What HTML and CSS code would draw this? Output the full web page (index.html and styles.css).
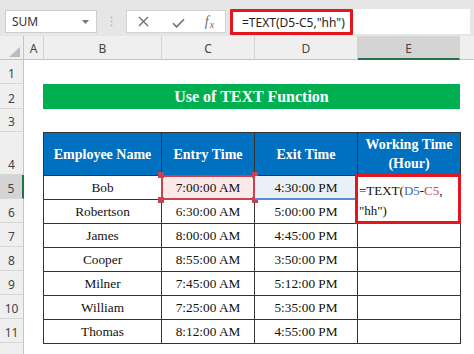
FILE: index.html
```html
<!DOCTYPE html>
<html>
<head>
<meta charset="utf-8">
<link rel="stylesheet" href="styles.css">
</head>
<body>
<div class="app">
  <div class="toolbar">
    <div class="namebox"><span>SUM</span><svg class="caret" width="7" height="4" viewBox="0 0 7 4"><path d="M0 0H7L3.5 4Z" fill="#777"/></svg></div>
    <div class="dots"><svg width="3" height="11" viewBox="0 0 3 11"><circle cx="1.5" cy="1.5" r="1" fill="#bbb"/><circle cx="1.5" cy="5.5" r="1" fill="#bbb"/><circle cx="1.5" cy="9.5" r="1" fill="#bbb"/></svg></div>
    <div class="btns">
      <span class="btn b1"><svg width="11" height="11" viewBox="0 0 11 11"><path d="M1 1L10 10M10 1L1 10" stroke="#6f6f6f" stroke-width="1.4" fill="none"/></svg></span>
      <span class="btn b2"><svg width="13" height="10" viewBox="0 0 13 10"><path d="M1 5.2L4.6 8.8L12 1.2" stroke="#6f6f6f" stroke-width="1.6" fill="none"/></svg></span>
      <span class="btn b3"><span class="fx"><i>f</i><span class="sub">x</span></span></span>
    </div>
    <div class="fbar"><div class="finput">=TEXT(D5-C5,"hh")</div></div>
  </div>
  <div class="sheet">
    <div class="corner"><svg width="11" height="10" viewBox="0 0 11 10"><path d="M11 0V10H0Z" fill="#bcbcbc"/></svg></div>
    <div class="colheads">
      <div class="ch w-a">A</div>
      <div class="ch w-b">B</div>
      <div class="ch w-c">C</div>
      <div class="ch w-d">D</div>
      <div class="ch w-e active">E</div>
      <div class="ch w-f"></div>
    </div>
    <div class="rowheads">
      <div class="rh r24">1</div>
      <div class="rh r25">2</div>
      <div class="rh r23">3</div>
      <div class="rh r43">4</div>
      <div class="rh r24 active">5</div>
      <div class="rh r24">6</div>
      <div class="rh r24">7</div>
      <div class="rh r24">8</div>
      <div class="rh r24">9</div>
      <div class="rh r24">10</div>
      <div class="rh r24">11</div>
      <div class="rh rlast"></div>
    </div>
    <div class="canvas">
      <div class="banner">Use of TEXT Function</div>
      <div class="table">
        <div class="cell head">Employee Name</div>
        <div class="cell head">Entry Time</div>
        <div class="cell head">Exit Time</div>
        <div class="cell head">Working Time (Hour)</div>

        <div class="cell">Bob</div>
        <div class="cell sel-c">7:00:00 AM<span class="hd tl"></span><span class="hd tr"></span><span class="hd bl"></span><span class="hd br"></span></div>
        <div class="cell sel-d">4:30:00 PM</div>
        <div class="cell edit"><div class="etext">=TEXT(<span class="ref-d">D5</span>-<span class="ref-c">C5</span>,<br>"hh")</div></div>

        <div class="cell">Robertson</div>
        <div class="cell">6:30:00 AM</div>
        <div class="cell">5:00:00 PM</div>

        <div class="cell">James</div>
        <div class="cell">8:00:00 AM</div>
        <div class="cell">4:45:00 PM</div>
        <div class="cell"></div>

        <div class="cell">Cooper</div>
        <div class="cell">8:55:00 AM</div>
        <div class="cell">3:50:00 PM</div>
        <div class="cell"></div>

        <div class="cell">Milner</div>
        <div class="cell">7:45:00 AM</div>
        <div class="cell">5:12:00 PM</div>
        <div class="cell"></div>

        <div class="cell">William</div>
        <div class="cell">7:25:00 AM</div>
        <div class="cell">5:35:00 PM</div>
        <div class="cell"></div>

        <div class="cell">Thomas</div>
        <div class="cell">8:12:00 AM</div>
        <div class="cell">4:55:00 PM</div>
        <div class="cell"></div>
      </div>
    </div>
  </div>
</div>
</body>
</html>
```
FILE: styles.css
```css
* { box-sizing: border-box; }
html, body { margin: 0; padding: 0; background: #fff; }
body { width: 474px; height: 354px; overflow: hidden; font-family: "Noto Sans", "Open Sans", sans-serif; }

.app { width: 474px; height: 354px; display: flex; flex-direction: column; }

/* toolbar */
.toolbar {
  height: 36px; flex: none; background: #e6e6e6;
  display: flex; align-items: flex-start; padding: 10px 0 0 5px;
}
.namebox {
  width: 92px; height: 23px; background: #fff; border: 1px solid #cdcdcd;
  display: flex; align-items: center; justify-content: space-between;
  padding: 0 7px 0 6px; font-size: 12px; color: #333;
}
.caret { margin-top: 1px; }
.dots { width: 29px; height: 23px; display: flex; align-items: center; justify-content: center; }
.btns {
  width: 100px; height: 23px; background: #fff; border: 1px solid #d3d3d3;
  display: flex; align-items: center;
}
.btn { display: flex; align-items: center; justify-content: center; height: 21px; }
.b1 { width: 33px; }
.b2 { width: 36px; padding-top: 2px; }
.b3 { width: 27px; }
.fx { font-family: "Liberation Serif", serif; color: #6f6f6f; font-size: 14px; display: flex; align-items: baseline; }
.fx i { font-style: italic; }
.fx .sub { font-style: italic; font-size: 10px; margin-left: 1px; position: relative; top: 2px; }
.fbar {
  margin-left: 4px; margin-top: -1px; width: 240px; height: 25px; background: #fff;
  display: flex; align-items: flex-start;
}
.finput {
  width: 123px; height: 26px; border: 3px solid #e3151d; border-radius: 1px;
  font-size: 12px; color: #222; padding-left: 9px; display: flex; align-items: center;
  white-space: nowrap;
}

/* sheet */
.sheet {
  flex: 1; display: grid; grid-template-columns: 24px 1fr; grid-template-rows: 24px 1fr;
}
.corner {
  background: #efefef; border-right: 1px solid #c4c4c4; border-bottom: 1px solid #c4c4c4;
  display: flex; align-items: flex-end; justify-content: flex-end; padding: 0 3px 2px 0;
}
.colheads { display: flex; }
.ch {
  height: 24px; background: #efefef; border-right: 1px solid #d2d2d2; border-bottom: 1px solid #c4c4c4;
  display: flex; align-items: flex-end; justify-content: center; padding-bottom: 3px;
  font-size: 12px; color: #444; line-height: 14px;
}
.ch.active { background: #d4d4d4; border-bottom: 2px solid #217346; padding-bottom: 2px; }
.w-a { width: 20px; }
.w-b { width: 118px; }
.w-c { width: 93px; }
.w-d { width: 103px; }
.w-e { width: 102px; }
.w-f { flex: 1; border-right: none; }

.rowheads { display: flex; flex-direction: column; }
.rh {
  background: #efefef; border-right: 1px solid #c4c4c4; border-bottom: 1px solid #d6d6d6;
  display: flex; align-items: flex-end; justify-content: center; padding-bottom: 2px;
  font-size: 12px; color: #444; line-height: 14px;
}
.rh.active { background: #d4d4d4; border-right: 2px solid #217346; }
.r23 { height: 23px; }
.r24 { height: 24px; }
.r25 { height: 25px; }
.r43 { height: 43px; }
.rlast { flex: 1; border-bottom: none; }

.canvas { padding: 24px 0 0 19px; }
.banner {
  width: 417px; height: 25px; background: #00b050; color: #fff;
  font-family: "Liberation Serif", serif; font-weight: bold; font-size: 16px;
  display: flex; align-items: center; justify-content: center;
  margin-bottom: 23px;
}

.table {
  display: grid; width: 418px;
  grid-template-columns: 117px 92px 102px 102px;
  grid-template-rows: 42px repeat(7, 23px);
  gap: 1px; padding: 1px; background: #333;
}
.cell {
  background: #fff; display: flex; align-items: center; justify-content: center;
  font-family: "Liberation Serif", serif; font-size: 13.3px; color: #111;
  white-space: nowrap;
}
.cell.head {
  background: #0070c0; color: #fff; font-weight: bold; font-size: 14px;
  text-align: center; white-space: normal; line-height: 19px; padding: 0 4px;
}
.sel-c { position: relative; background: #fbe8e9; }
.sel-c::before {
  content: ""; position: absolute; inset: -1px; border: 2px solid #c8434f;
}
.hd { position: absolute; width: 6px; height: 6px; background: #c8434f; }
.hd.tl { left: -4px; top: -4px; }
.hd.tr { right: -4px; top: -4px; }
.hd.bl { left: -4px; bottom: -4px; }
.hd.br { right: -4px; bottom: -4px; }

.sel-d { position: relative; background: #eaf0f8; }
.sel-d::before {
  content: ""; position: absolute; inset: -1px 0 -1px 0; border-bottom: 2px solid #5b8bd0;
}

.edit {
  grid-row: span 2; position: relative;
  align-items: flex-start; justify-content: flex-start;
  padding: 5px 0 0 1px;
}
.etext { line-height: 20px; font-size: 13px; text-align: left; }
.edit::after {
  content: ""; position: absolute; inset: -2px -1px -1px -3px; border: 3px solid #e3151d;
}
.ref-d { color: #3b6cc0; }
.ref-c { color: #c0504d; }
```
